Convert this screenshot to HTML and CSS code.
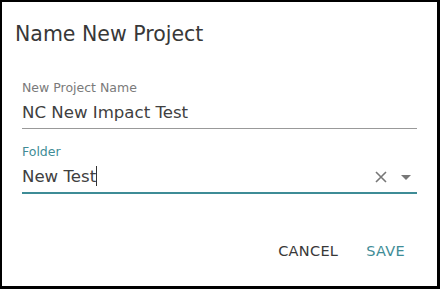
FILE: index.html
```html
<!DOCTYPE html>
<html>
<head>
<meta charset="utf-8">
<link rel="stylesheet" href="styles.css">
</head>
<body>
<div class="dialog">
  <h1 class="title">Name New Project</h1>
  <div class="content">
    <div class="field">
      <div class="label">New Project Name</div>
      <div class="input">NC New Impact Test</div>
    </div>
    <div class="field focused">
      <div class="label">Folder</div>
      <div class="input select">
        <span class="value">New Test<span class="caret"></span></span>
        <span class="icons">
          <svg class="clear" width="12" height="12" viewBox="0 0 12 12"><path d="M1 1L11 11M11 1L1 11" stroke="#777" stroke-width="1.6" fill="none"/></svg>
          <svg class="arrow" width="10" height="5" viewBox="0 0 10 5"><path d="M0 0H10L5 5Z" fill="#777"/></svg>
        </span>
      </div>
    </div>
  </div>
  <div class="actions">
    <button class="btn cancel">CANCEL</button>
    <button class="btn save">SAVE</button>
  </div>
</div>
</body>
</html>
```
FILE: styles.css
```css
html, body { margin: 0; padding: 0; background: #fff; }
body { font-family: "DejaVu Sans", "Open Sans", sans-serif; }
.dialog {
  box-sizing: border-box;
  width: 440px;
  height: 289px;
  border: 2px solid #000;
  border-right-width: 3px;
  border-bottom-width: 3px;
  display: flex;
  flex-direction: column;
}
.title {
  margin: 0;
  padding: 19px 0 0 13px;
  font-size: 20.5px;
  font-weight: normal;
  color: #383838;
  line-height: 26px;
}
.content {
  padding: 33px 20px 0 20px;
  display: flex;
  flex-direction: column;
  gap: 15px;
}
.label {
  font-size: 12.5px;
  color: #7a7a7a;
  line-height: 15px;
}
.input {
  font-size: 16.6px;
  color: #404040;
  line-height: 22px;
  padding: 7px 0 4px;
  border-bottom: 1px solid #999;
}
.focused .label { color: #3e8c96; }
.focused .input { border-bottom: 2px solid #3e8c96; padding-bottom: 4px; }
.select { display: flex; align-items: center; justify-content: space-between; }
.caret { display: inline-block; width: 1px; height: 20px; background: #333; vertical-align: -4px; }
.icons { display: flex; align-items: center; gap: 14px; padding-right: 6px; }
.actions {
  margin-top: auto;
  padding: 0 32px 27px 0;
  display: flex;
  justify-content: flex-end;
  gap: 28px;
}
.btn {
  font-family: inherit;
  border: none;
  background: none;
  padding: 0;
  font-size: 14.5px;
  letter-spacing: 0.3px;
  color: #383838;
}
.save { color: #3e8c96; }
```
